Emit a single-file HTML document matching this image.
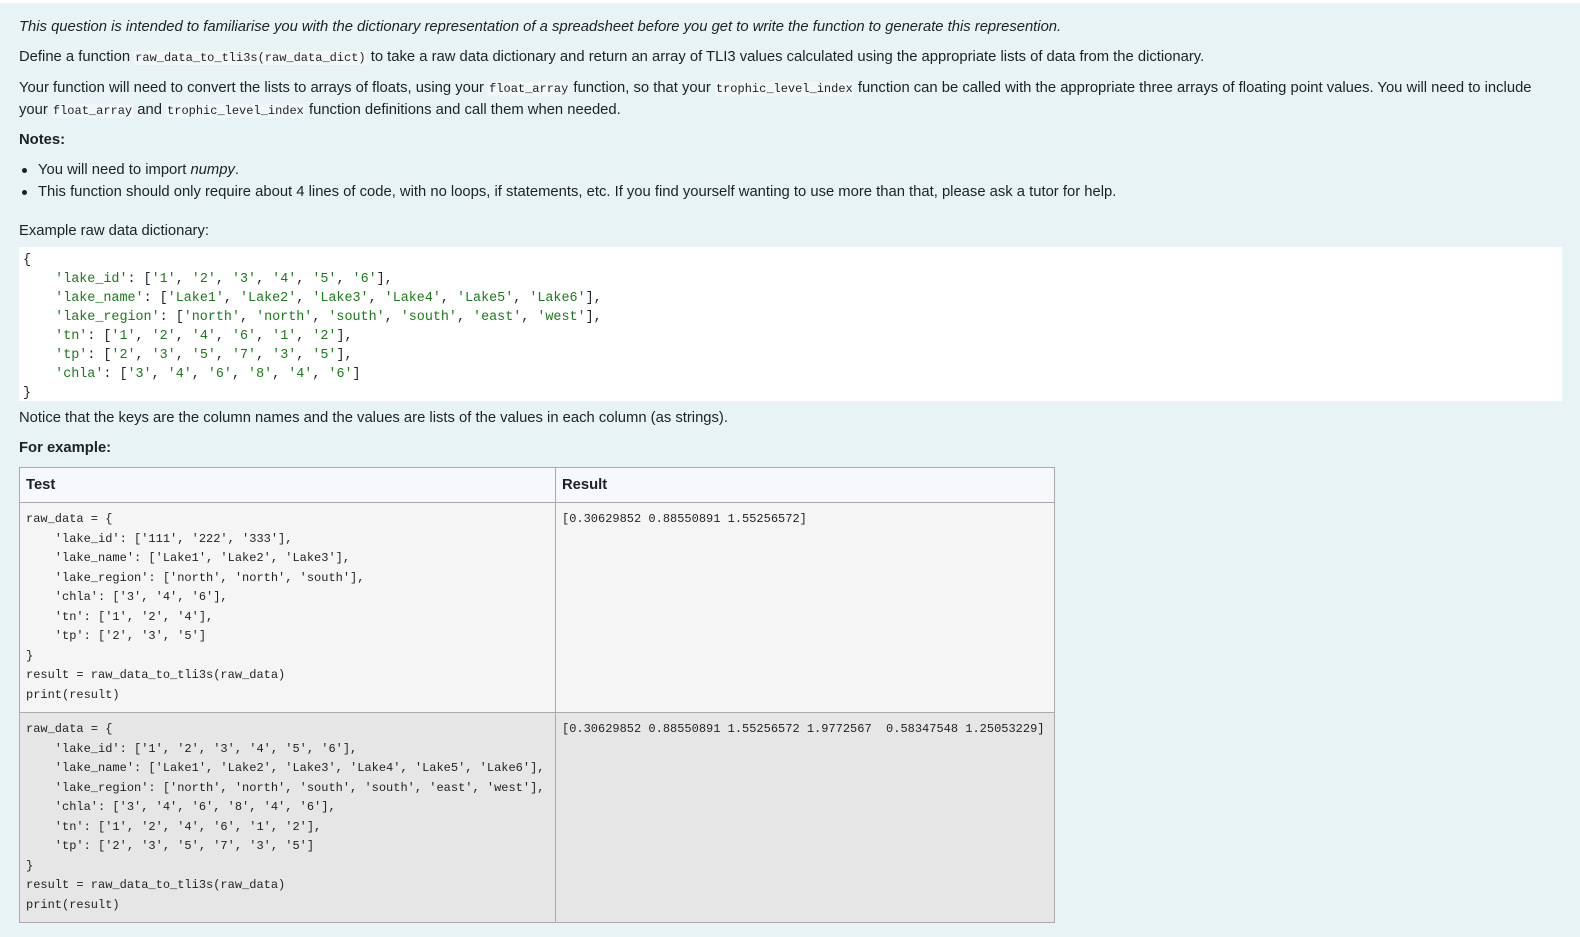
<!DOCTYPE html>
<html><head><meta charset="utf-8"><style>
html,body{margin:0;padding:0;}
body{width:1580px;height:937px;background:#e7f3f5;position:relative;overflow:hidden;font-family:"Liberation Sans",sans-serif;font-size:14.8px;color:#1d2125;border-top:3px solid #fff;box-sizing:border-box;}
.t{position:absolute;left:19px;line-height:20px;white-space:nowrap;}
code{font-family:"Liberation Mono",monospace;font-size:12px;background:#f3f7f8;color:#1d2125;padding:0 1px;}
.b{position:absolute;left:22px;line-height:20px;white-space:nowrap;}
.b:before{content:"";position:absolute;left:0;top:8px;width:5px;height:5px;border-radius:50%;background:#1d2125;}
.b span{margin-left:16px;}
pre{margin:0;font-family:"Liberation Mono",monospace;}
#ex{position:absolute;left:19px;top:244px;width:1543px;height:154px;background:#fff;font-size:13.4px;line-height:19px;}
#ex pre{position:absolute;left:4px;top:4px;}
.s{color:#1a7a1a;}
table{position:absolute;left:19px;top:464px;border-collapse:collapse;width:1036px;}
td,th{border:1px solid #aaa;vertical-align:top;text-align:left;padding:0;}
th{background:#f6f8fc;height:34px;font-weight:bold;font-size:14.8px;padding:0 6px;vertical-align:middle;}
td{padding:7px 6px 5px;height:197px;}
td pre{font-size:12px;line-height:19.5px;}
td pre.r{font-size:12px;}
tr.r1 td{background:#f5f5f5;}
tr.r2 td{background:#e6e6e6;}
</style></head><body>
<div class="t" style="top:14px;font-style:italic">This question is intended to familiarise you with the dictionary representation of a spreadsheet before you get to write the function to generate this represention.</div>
<div class="t" style="top:44px">Define a function <code>raw_data_to_tli3s(raw_data_dict)</code> to take a raw data dictionary and return an array of TLI3 values calculated using the appropriate lists of data from the dictionary.</div>
<div class="t" style="top:75px">Your function will need to convert the lists to arrays of floats, using your <code>float_array</code> function, so that your <code>trophic_level_index</code> function can be called with the appropriate three arrays of floating point values. You will need to include</div>
<div class="t" style="top:97px">your <code>float_array</code> and <code>trophic_level_index</code> function definitions and call them when needed.</div>
<div class="t" style="top:127px;font-weight:bold">Notes:</div>
<div class="b" style="top:157px"><span>You will need to import <i>numpy</i>.</span></div>
<div class="b" style="top:179px"><span>This function should only require about 4 lines of code, with no loops, if statements, etc. If you find yourself wanting to use more than that, please ask a tutor for help.</span></div>
<div class="t" style="top:218px">Example raw data dictionary:</div>
<div id="ex"><pre>{
    <span class="s">'lake_id'</span>: [<span class="s">'1'</span>, <span class="s">'2'</span>, <span class="s">'3'</span>, <span class="s">'4'</span>, <span class="s">'5'</span>, <span class="s">'6'</span>],
    <span class="s">'lake_name'</span>: [<span class="s">'Lake1'</span>, <span class="s">'Lake2'</span>, <span class="s">'Lake3'</span>, <span class="s">'Lake4'</span>, <span class="s">'Lake5'</span>, <span class="s">'Lake6'</span>],
    <span class="s">'lake_region'</span>: [<span class="s">'north'</span>, <span class="s">'north'</span>, <span class="s">'south'</span>, <span class="s">'south'</span>, <span class="s">'east'</span>, <span class="s">'west'</span>],
    <span class="s">'tn'</span>: [<span class="s">'1'</span>, <span class="s">'2'</span>, <span class="s">'4'</span>, <span class="s">'6'</span>, <span class="s">'1'</span>, <span class="s">'2'</span>],
    <span class="s">'tp'</span>: [<span class="s">'2'</span>, <span class="s">'3'</span>, <span class="s">'5'</span>, <span class="s">'7'</span>, <span class="s">'3'</span>, <span class="s">'5'</span>],
    <span class="s">'chla'</span>: [<span class="s">'3'</span>, <span class="s">'4'</span>, <span class="s">'6'</span>, <span class="s">'8'</span>, <span class="s">'4'</span>, <span class="s">'6'</span>]
}</pre></div>
<div class="t" style="top:405px">Notice that the keys are the column names and the values are lists of the values in each column (as strings).</div>
<div class="t" style="top:435px;font-weight:bold">For example:</div>
<table>
<tr><th style="width:523px">Test</th><th>Result</th></tr>
<tr class="r1"><td style="width:523px"><pre>raw_data = {
    'lake_id': ['111', '222', '333'],
    'lake_name': ['Lake1', 'Lake2', 'Lake3'],
    'lake_region': ['north', 'north', 'south'],
    'chla': ['3', '4', '6'],
    'tn': ['1', '2', '4'],
    'tp': ['2', '3', '5']
}
result = raw_data_to_tli3s(raw_data)
print(result)</pre></td><td><pre class="r">[0.30629852 0.88550891 1.55256572]</pre></td></tr>
<tr class="r2"><td><pre>raw_data = {
    'lake_id': ['1', '2', '3', '4', '5', '6'],
    'lake_name': ['Lake1', 'Lake2', 'Lake3', 'Lake4', 'Lake5', 'Lake6'],
    'lake_region': ['north', 'north', 'south', 'south', 'east', 'west'],
    'chla': ['3', '4', '6', '8', '4', '6'],
    'tn': ['1', '2', '4', '6', '1', '2'],
    'tp': ['2', '3', '5', '7', '3', '5']
}
result = raw_data_to_tli3s(raw_data)
print(result)</pre></td><td><pre class="r">[0.30629852 0.88550891 1.55256572 1.9772567  0.58347548 1.25053229]</pre></td></tr>
</table>
</body></html>
